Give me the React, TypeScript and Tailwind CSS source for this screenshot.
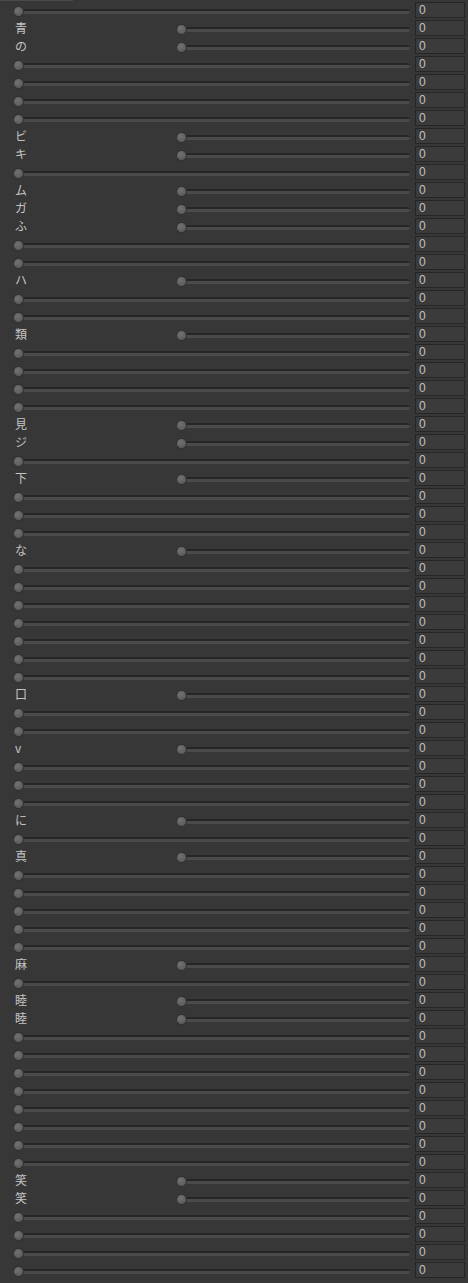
const labels: Record<number, string> = {
  1: "青",
  2: "の",
  7: "ビ",
  8: "キ",
  10: "ム",
  11: "ガ",
  12: "ふ",
  15: "ハ",
  18: "類",
  23: "見",
  24: "ジ",
  26: "下",
  30: "な",
  38: "口",
  41: "v",
  45: "に",
  47: "真",
  53: "麻",
  55: "睦",
  56: "睦",
  65: "笑",
  66: "笑",
};

const ROWS = 71;

function Slider() {
  return (
    <div className="relative h-[18px] flex-1">
      <div className="mt-[8px] h-[5px] rounded-r-full border-t-2 border-[#262626] bg-[#4a4a4a]" />
      <div className="absolute left-0 top-[5px] h-[11px] w-[11px] rounded-full border border-[#303030] bg-[radial-gradient(circle_at_40%_35%,#727272,#535353)]" />
    </div>
  );
}

function Row({ label }: { label?: string }) {
  return (
    <div className="flex h-[18px] items-start pl-[13px] pr-[3px]">
      {label && (
        <span className="w-[163px] pl-[2px] pt-[1px] text-[12px] leading-[16px] text-[#c4c4c4] [font-family:'Noto_Sans_CJK_JP','Noto_Sans',sans-serif]">
          {label}
        </span>
      )}
      <Slider />
      <div className="ml-[5px] mt-[1px] h-[16px] w-[50px] border border-[#262626] bg-[#3b3b3b] pl-[3px] text-[12px] leading-[14px] text-[#c2c2c2] [font-family:'Liberation_Sans',sans-serif]">
        0
      </div>
    </div>
  );
}

export default function App() {
  return (
    <div className="min-h-[1283px] w-[468px] overflow-hidden bg-[#373737]">
      <div className="h-[1px] w-[73px] bg-[#4a4a4a]" />
      {Array.from({ length: ROWS }, (_, i) => (
        <Row key={i} label={labels[i]} />
      ))}
    </div>
  );
}
